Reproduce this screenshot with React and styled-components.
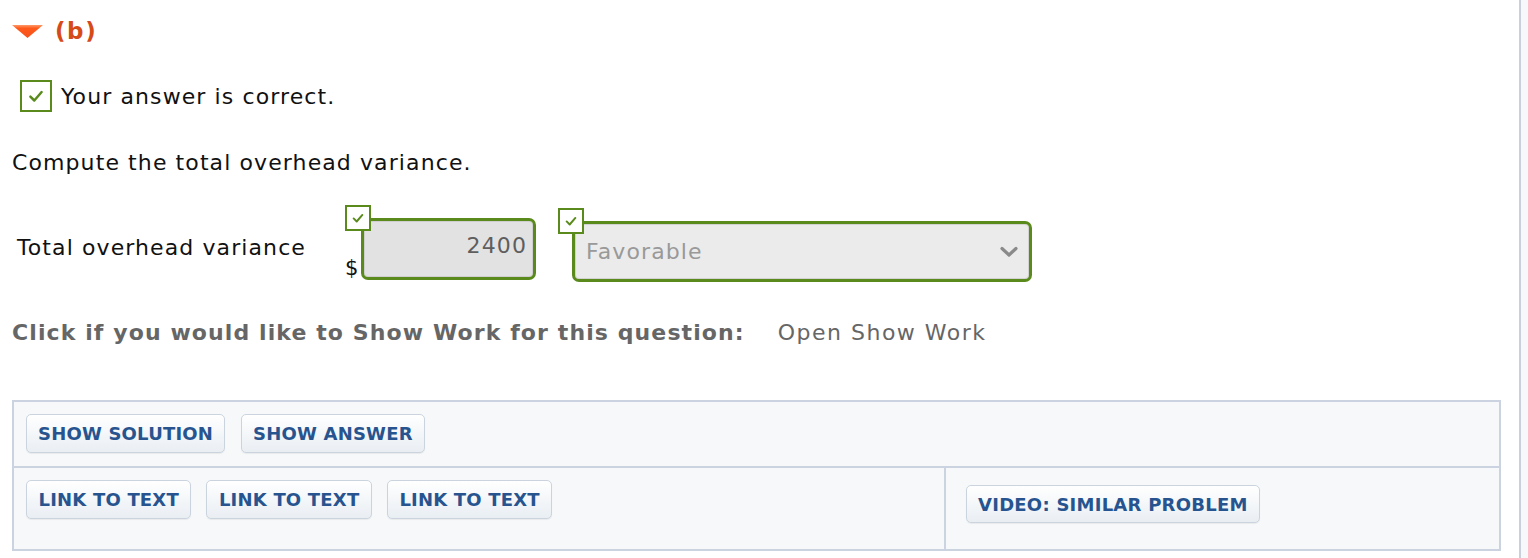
import React from "react";
import styled, { createGlobalStyle } from "styled-components";

const Global = createGlobalStyle`
  html, body { margin: 0; padding: 0; background: #ffffff; }
  body { font-family: "DejaVu Sans", Verdana, sans-serif; color: #111; }
  #root { height: 558px; }
`;

const Page = styled.div`
  display: flex;
  height: 558px;
  overflow: hidden;
`;

const Main = styled.div`
  width: 1519px;
  box-sizing: border-box;
  padding: 0 0 0 12px;
`;

const Gutter = styled.div`
  flex: 1;
  border-left: 2px solid #c9d0dc;
  background: #f6f8fa;
`;

const Header = styled.div`
  display: flex;
  align-items: center;
  gap: 12px;
  height: 28px;
  margin-top: 17px;
`;

const Caret = styled.svg`
  width: 31px;
  height: 14px;
  display: block;
  margin-top: 2px;
`;

const PartLabel = styled.span`
  font-family: "DejaVu Sans", Verdana, sans-serif;
  font-weight: bold;
  font-size: 23px;
  letter-spacing: 1.6px;
  color: #d64a18;
`;

const CorrectRow = styled.div`
  display: flex;
  align-items: center;
  gap: 9px;
  margin: 35px 0 0 8px;
  font-size: 22px;
  letter-spacing: 1.1px;
`;

const CheckBox = styled.span`
  box-sizing: border-box;
  width: ${(p) => p.$size}px;
  height: ${(p) => p.$size}px;
  border: 2px solid #5a8a1c;
  background: #fff;
  display: flex;
  align-items: center;
  justify-content: center;
  flex: none;
`;

const Prompt = styled.p`
  margin: 37px 0 0 0;
  font-size: 22px;
  letter-spacing: 1.1px;
  line-height: 28px;
`;

const AnswerRow = styled.div`
  display: flex;
  align-items: flex-start;
  margin-top: 28px;
  height: 80px;
`;

const FieldLabel = styled.div`
  font-size: 22px;
  letter-spacing: 1.1px;
  width: 333px;
  padding: 30px 0 0 5px;
  box-sizing: border-box;
`;

const Dollar = styled.span`
  font-size: 21px;
  margin-top: 51px;
  width: 16px;
`;

const FieldWrap = styled.div`
  position: relative;
  margin-top: ${(p) => p.$top}px;
  margin-left: ${(p) => p.$left}px;
`;

const FieldCheck = styled.div`
  position: absolute;
  left: ${(p) => p.$x}px;
  top: ${(p) => p.$y}px;
  z-index: 2;
`;

const NumberBox = styled.div`
  box-sizing: border-box;
  width: 175px;
  height: 62px;
  border: 3px solid #5a8a1c;
  border-radius: 7px;
  background: #e2e2e2;
  box-shadow: inset 0 0 0 1px #cfcfcf;
  display: flex;
  justify-content: flex-end;
  align-items: flex-start;
  padding: 12px 6px 0 0;
  font-size: 22px;
  letter-spacing: 1.1px;
  color: #5e5e5e;
`;

const SelectBox = styled.div`
  box-sizing: border-box;
  width: 460px;
  height: 61px;
  border: 3px solid #5a8a1c;
  border-radius: 7px;
  background: #ebebeb;
  box-shadow: inset 0 0 0 1px #d2d2d2;
  display: flex;
  align-items: center;
  justify-content: space-between;
  padding: 0 10px 0 11px;
  font-size: 22px;
  letter-spacing: 1.1px;
  color: #999;
`;

const ShowWork = styled.div`
  display: flex;
  align-items: center;
  gap: 33px;
  margin-top: 35px;
  font-size: 22px;
  letter-spacing: 1.1px;
  color: #666;
`;

const ShowWorkLabel = styled.span`
  font-weight: bold;
`;

const ShowWorkLink = styled.span`
  letter-spacing: 1.5px;
`;

const Panel = styled.div`
  margin-top: 55px;
  width: 1489px;
  box-sizing: border-box;
  border: 2px solid #cbd3e0;
  background: #f6f8fa;
`;

const PanelRow = styled.div`
  display: flex;
  height: ${(p) => p.$h}px;
  border-top: ${(p) => (p.$divided ? "2px solid #cbd3e0" : "none")};
`;

const Cell = styled.div`
  box-sizing: border-box;
  width: ${(p) => p.$w || "auto"};
  flex: ${(p) => (p.$w ? "none" : "1")};
  display: flex;
  align-items: flex-start;
  gap: ${(p) => p.$gap || 16}px;
  padding: ${(p) => p.$pad};
  border-left: ${(p) => (p.$divided ? "2px solid #cbd3e0" : "none")};
`;

const Btn = styled.button`
  box-sizing: border-box;
  height: ${(p) => p.$h || 39}px;
  padding: 0 ${(p) => p.$px || 11}px;
  border: 1px solid #cbd4de;
  border-radius: 5px;
  background: linear-gradient(#ffffff, #e9eef3);
  box-shadow: 0 1px 1px rgba(0, 0, 0, 0.06);
  font-family: "DejaVu Sans", Verdana, sans-serif;
  font-weight: bold;
  font-size: ${(p) => p.$fs || 18}px;
  letter-spacing: ${(p) => p.$ls || 0.2}px;
  color: #27548f;
  white-space: nowrap;
  cursor: pointer;
`;

const Check = ({ size = 16 }) => (
  <svg width={size} height={size} viewBox="0 0 16 16">
    <path d="M3 8.5 L6.5 12 L13 4.5" fill="none" stroke="#5a8a1c" strokeWidth="2.2" strokeLinecap="round" strokeLinejoin="round" />
  </svg>
);

const Chevron = () => (
  <svg width="20" height="14" viewBox="0 0 20 14">
    <path d="M3 3.5 L10 10 L17 3.5" fill="none" stroke="#8a8a8a" strokeWidth="3.2" strokeLinecap="round" strokeLinejoin="round" />
  </svg>
);

export default function App() {
  return (
    <>
      <Global />
      <Page>
        <Main>
          <Header>
            <Caret viewBox="0 0 31 14">
              <defs>
                <linearGradient id="cg" x1="0" y1="0" x2="0" y2="1">
                  <stop offset="0" stopColor="#ff9a6a" />
                  <stop offset="0.25" stopColor="#ff5a1a" />
                  <stop offset="1" stopColor="#f4511e" />
                </linearGradient>
              </defs>
              <polygon points="0,0 31,0 15.5,13" fill="url(#cg)" />
            </Caret>
            <PartLabel>(b)</PartLabel>
          </Header>

          <CorrectRow>
            <CheckBox $size={32}>
              <Check size={18} />
            </CheckBox>
            <span>Your answer is correct.</span>
          </CorrectRow>

          <Prompt>Compute the total overhead variance.</Prompt>

          <AnswerRow>
            <FieldLabel>Total overhead variance</FieldLabel>
            <Dollar>$</Dollar>
            <FieldWrap $top={13} $left={0}>
              <FieldCheck $x={-16} $y={-13}>
                <CheckBox $size={26}>
                  <Check size={14} />
                </CheckBox>
              </FieldCheck>
              <NumberBox>2400</NumberBox>
            </FieldWrap>
            <FieldWrap $top={16} $left={36}>
              <FieldCheck $x={-14} $y={-13}>
                <CheckBox $size={26}>
                  <Check size={14} />
                </CheckBox>
              </FieldCheck>
              <SelectBox>
                <span>Favorable</span>
                <Chevron />
              </SelectBox>
            </FieldWrap>
          </AnswerRow>

          <ShowWork>
            <ShowWorkLabel>Click if you would like to Show Work for this question:</ShowWorkLabel>
            <ShowWorkLink>Open Show Work</ShowWorkLink>
          </ShowWork>

          <Panel>
            <PanelRow $h={64}>
              <Cell $pad="12px 0 0 12px">
                <Btn>SHOW SOLUTION</Btn>
                <Btn>SHOW ANSWER</Btn>
              </Cell>
            </PanelRow>
            <PanelRow $h={81} $divided>
              <Cell $w="930px" $pad="12px 0 0 12px" $gap={15}>
                <Btn $px={11.5}>LINK TO TEXT</Btn>
                <Btn $px={11.5}>LINK TO TEXT</Btn>
                <Btn $px={11.5}>LINK TO TEXT</Btn>
              </Cell>
              <Cell $divided $pad="17px 0 0 20px">
                <Btn $fs={18} $ls={0.25} $h={38}>VIDEO: SIMILAR PROBLEM</Btn>
              </Cell>
            </PanelRow>
          </Panel>
        </Main>
        <Gutter />
      </Page>
    </>
  );
}
